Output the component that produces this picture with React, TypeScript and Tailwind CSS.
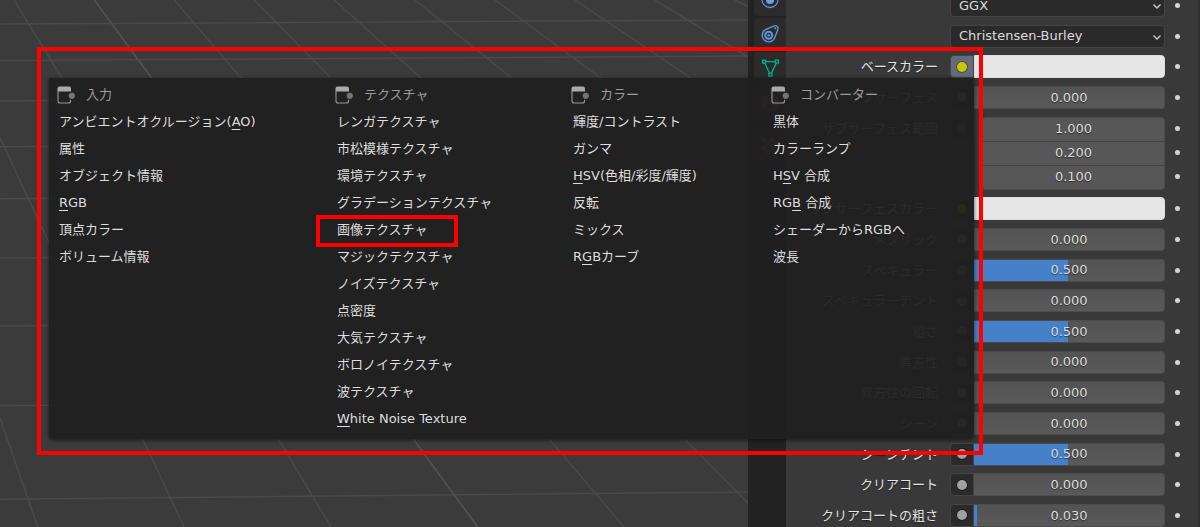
import { clsx } from 'clsx';
import type { ReactNode } from 'react';

type Field =
  | { kind: 'select'; id: string; label: string; value: string }
  | { kind: 'color'; id: string; label: string; active?: boolean }
  | { kind: 'slider'; id: string; label: string; value: string }
  | { kind: 'vector'; id: string; label: string; values: string[] };

const fields: Field[] = [
  { kind: 'select', id: 'distribution', label: 'ディストリビューション', value: 'GGX' },
  { kind: 'select', id: 'sss-method', label: 'サブサーフェス方式', value: 'Christensen-Burley' },
  { kind: 'color', id: 'base-color', label: 'ベースカラー', active: true },
  { kind: 'slider', id: 'subsurface', label: 'サブサーフェス', value: '0.000' },
  { kind: 'vector', id: 'radius', label: 'サブサーフェス範囲', values: ['1.000', '0.200', '0.100'] },
  { kind: 'color', id: 'sss-color', label: 'サブサーフェスカラー' },
  { kind: 'slider', id: 'metallic', label: 'メタリック', value: '0.000' },
  { kind: 'slider', id: 'specular', label: 'スペキュラー', value: '0.500' },
  { kind: 'slider', id: 'specular-tint', label: 'スペキュラーチント', value: '0.000' },
  { kind: 'slider', id: 'roughness', label: '粗さ', value: '0.500' },
  { kind: 'slider', id: 'anisotropic', label: '異方性', value: '0.000' },
  { kind: 'slider', id: 'anisotropic-rotation', label: '異方性の回転', value: '0.000' },
  { kind: 'slider', id: 'sheen', label: 'シーン', value: '0.000' },
  { kind: 'slider', id: 'sheen-tint', label: 'シーンチント', value: '0.500' },
  { kind: 'slider', id: 'clearcoat', label: 'クリアコート', value: '0.000' },
  { kind: 'slider', id: 'clearcoat-roughness', label: 'クリアコートの粗さ', value: '0.030' },
];

// "&" marks the shortcut letter of an entry
const menu = [
  {
    title: '入力',
    items: ['アンビエントオクルージョン(&AO)', '属性', 'オブジェクト情報', '&RGB', '頂点カラー', 'ボリューム情報'],
  },
  {
    title: 'テクスチャ',
    items: [
      'レンガテクスチャ',
      '市松模様テクスチャ',
      '環境テクスチャ',
      'グラデーションテクスチャ',
      '画像テクスチャ',
      'マジックテクスチャ',
      'ノイズテクスチャ',
      '点密度',
      '大気テクスチャ',
      'ボロノイテクスチャ',
      '波テクスチャ',
      '&White Noise Texture',
    ],
  },
  {
    title: 'カラー',
    items: ['輝度/コントラスト', 'ガンマ', '&HSV(色相/彩度/輝度)', '反転', 'ミックス', 'R&GBカーブ'],
  },
  {
    title: 'コンバーター',
    items: ['黒体', 'カラーランプ', 'H&SV 合成', 'RG&B 合成', 'シェーダーからRGBへ', '波長'],
  },
];

const gridLines = [
  'M0 24L748 20M0 60.5L748 56M0 101L748 96M0 146.7L748 142M0 198.7L748 194M0 258L748 253M0 326L748 320M0 405.7L748 399M0 499.3L748 492',
  'M14 0L62 78M174.3 0L241 78M254.3 0L331 78M334.3 0L421 78M415 0L511.7 78M495 0L601 78M575 0L691 78M655 0L748 57M735 0L748 6.7',
  'M0 137.7L49 242.7M0 418L37.7 527M142.7 439L184 527M278.3 439L331 527M549.3 439L624 527M684.3 439L748 503',
];

const ViewportGrid = () => (
  <svg
    className="absolute inset-0 h-full w-full"
    viewBox="0 0 748 527"
    preserveAspectRatio="xMinYMin slice"
    fill="none"
    stroke="#4a4a4a"
    aria-hidden="true"
  >
    {gridLines.map(d => (
      <path key={d} d={d} strokeWidth="1.5" />
    ))}
    <path d="M94.3 0L151.7 78M413.3 439L477.7 527" stroke="#525252" strokeWidth="1.6" />
  </svg>
);

const NodeIcon = () => (
  <svg className="h-[18px] w-[18px] shrink-0" viewBox="0 0 18 18" fill="none" aria-hidden="true">
    <path d="M.5 5.5V2.5Q.5.5 2.5.5H12Q14 .5 14 2.5V5.5Z" fill="#aaaaaa" />
    <path d="M1 5V15Q1 17 3 17H11.5Q13.5 17 13.5 15V13.8" stroke="#9a9a9a" strokeWidth="1.1" />
    <circle cx="14.8" cy="9.8" r="3.1" fill="#757575" />
  </svg>
);

const PhysicsIcon = () => (
  <svg className="h-5 w-5" viewBox="0 0 20 20" fill="none" stroke="#5d92d6" aria-hidden="true">
    <circle cx="10" cy="9.5" r="8" strokeWidth="1.3" strokeDasharray="44 6" />
    <circle cx="10" cy="10" r="4" fill="#6ea0e0" stroke="none" />
  </svg>
);

const ConstraintIcon = () => (
  <svg className="h-5 w-5" viewBox="0 0 20 20" fill="none" stroke="#6099dc" aria-hidden="true">
    <path
      d="M5.9 5.4L14.3 1.8A2.8 2.8 0 0 1 18 5L14.75 13.65A6.5 6.5 0 1 1 5.9 5.4Z"
      strokeWidth="1.3"
    />
    <circle cx="8.7" cy="11.3" r="3.5" strokeWidth="2" />
    <circle cx="8.7" cy="11.3" r="1.3" fill="#6099dc" stroke="none" />
    <circle cx="15.4" cy="4.3" r="1" fill="#6099dc" stroke="none" />
  </svg>
);

const MeshIcon = () => (
  <svg className="h-5 w-5" viewBox="0 0 20 20" fill="none" stroke="#00b386" strokeWidth="1.3" aria-hidden="true">
    <path d="M2.6 2.1H5.6V5.1H2.6ZM15.4 2.1H18.4V5.1H15.4ZM8.9 15.1H11.9V18.1H8.9Z" />
    <path d="M5.6 3.6H15.4M4.8 5.1L9.4 15.1M16.2 5.1L11.4 15.1" />
  </svg>
);

const MaterialIcon = () => (
  <svg className="h-5 w-5" viewBox="0 0 20 20" fill="none" aria-hidden="true">
    <circle cx="10" cy="10" r="8.3" stroke="#d05050" strokeWidth="1.3" />
    <path d="M10 10L16 4.5A8 8 0 0 1 16 15.5ZM10 10L4 15.5A8 8 0 0 1 5 4Q10 3 10 10Z" fill="#d05050" />
  </svg>
);

const TextureIcon = () => (
  <svg className="h-5 w-5" viewBox="0 0 20 20" fill="#c04a4a" aria-hidden="true">
    <path d="M2 2H6V6H2ZM10 2H14V6H10ZM6 6H10V10H6ZM14 6H18V10H14ZM2 10H6V14H2ZM10 10H14V14H10ZM6 14H10V18H6ZM14 14H18V18H14Z" />
  </svg>
);

const Tab = ({ name, className, children }: { name: string; className?: string; children: ReactNode }) => (
  <button
    type="button"
    aria-label={name}
    className={clsx('flex h-8 w-8 shrink-0 items-center justify-center rounded-l bg-[#2b2b2b]', className)}
  >
    {children}
  </button>
);

const socketColor = (field: Field) => {
  if (field.kind === 'color') return 'bg-[#c8c800]';
  if (field.kind === 'vector') return 'bg-[#6464c8]';
  return 'bg-[#a1a1a1]';
};

const Socket = ({ field }: { field: Field }) => (
  <button
    type="button"
    aria-label={`${field.label} 入力`}
    className={clsx(
      'flex h-[23px] w-6 shrink-0 items-center justify-center rounded-l border border-[#444444]',
      field.kind === 'color' && field.active ? 'bg-[#656b78]' : 'bg-[#2a2a2a]',
    )}
  >
    <span className={clsx('h-[10px] w-[10px] rounded-full ring-1 ring-black/30', socketColor(field))} />
  </button>
);

const inputClass =
  'absolute inset-0 w-full bg-transparent text-center text-[#dcdcdc] outline-none [text-shadow:0_1px_1px_#0008]';

const fillPercent = (value: string) => Math.max(0, Number(value) * 102 - 1.5);

const FieldControl = ({ field }: { field: Field }) => {
  if (field.kind === 'select') {
    return (
      <div className="relative h-[23px] flex-1">
        <select
          id={field.id}
          aria-label={field.label}
          className="h-full w-full appearance-none rounded border border-[#444444] bg-[#2a2a2a] pl-2 leading-5 text-[#dcdcdc]"
        >
          <option>{field.value}</option>
        </select>
        <svg
          className="pointer-events-none absolute top-2 right-1 h-2 w-2"
          viewBox="0 0 8 8"
          fill="none"
          stroke="#cfcfcf"
          strokeWidth="1.4"
          aria-hidden="true"
        >
          <path d="M.5 2.5L4 6L7.5 2.5" />
        </svg>
      </div>
    );
  }

  if (field.kind === 'color') {
    return (
      <>
        <Socket field={field} />
        <button type="button" id={field.id} className="h-[23px] flex-1 rounded-r border border-[#dcdcdc] bg-[#e6e6e6]" />
      </>
    );
  }

  if (field.kind === 'vector') {
    return (
      <>
        <Socket field={field} />
        <div className="ml-2 flex h-[73px] flex-1 flex-col divide-y divide-[#424242] overflow-hidden rounded border border-[#4c4c4c] bg-[#575757]">
          {field.values.map((value, i) => (
            <div key={value} className="relative flex-1">
              <input id={i ? `${field.id}-${i}` : field.id} aria-label={field.label} defaultValue={value} className={inputClass} />
            </div>
          ))}
        </div>
      </>
    );
  }

  return (
    <>
      <Socket field={field} />
      <div className="relative h-[23px] flex-1 overflow-hidden rounded-r border-y border-r border-[#4c4c4c] bg-linear-to-b from-[#535353] to-[#595959]">
        <div className="h-full bg-[#4680c8]" style={{ width: `${fillPercent(field.value)}%` }} />
        <input id={field.id} defaultValue={field.value} className={inputClass} />
      </div>
    </>
  );
};

const Dots = ({ count }: { count: number }) => (
  <div className="flex w-[33px] shrink-0 flex-col pl-[10px]">
    {Array.from({ length: count }, (_, i) => (
      <div key={i} className={clsx('flex items-center', count > 1 ? 'h-6' : 'h-[23px]')}>
        <span className="h-[5px] w-[5px] rounded-full bg-[#d4d4d4]" />
      </div>
    ))}
  </div>
);

const Properties = () => (
  <section className="w-[414px] shrink-0 border-r-2 border-[#303030] bg-[#393939]">
    <div className="-mt-[6px] flex h-[calc(100%+6px)] flex-col justify-between">
      {fields.map(field => (
        <div key={field.id} className="flex items-start">
          {field.kind !== 'select' && (
            <label
              htmlFor={field.id}
              className="flex-1 pr-3 text-right leading-[23px] text-[#e4e4e4] [text-shadow:0_1px_1px_#0006]"
            >
              {field.label}
            </label>
          )}
          <div className="ml-auto flex w-[215px] shrink-0">
            <FieldControl field={field} />
          </div>
          <Dots count={field.kind === 'vector' ? 3 : 1} />
        </div>
      ))}
    </div>
  </section>
);

const MenuLabel = ({ text }: { text: string }) => {
  const at = text.indexOf('&');
  if (at < 0) return <>{text}</>;
  return (
    <>
      {text.slice(0, at)}
      <span className="underline decoration-1 underline-offset-3">{text[at + 1]}</span>
      {text.slice(at + 2)}
    </>
  );
};

const NodeMenu = () => (
  <div
    role="menu"
    className="absolute top-[78px] left-[49px] grid grid-cols-[278px_236px_200px_211px] rounded-b bg-[#202020]/95 pt-[3px] pb-[7px] shadow-[0_1px_4px_#0009]"
  >
    {menu.map(column => (
      <div key={column.title}>
        <h2 className="flex h-[27px] items-center gap-[11px] pl-2 text-[#9c9c9c]">
          <NodeIcon />
          {column.title}
        </h2>
        {column.items.map(item => (
          <button
            key={item}
            type="button"
            role="menuitem"
            className="relative flex h-[27px] w-full items-center pl-[10px] text-left whitespace-pre text-[#dedede]"
          >
            <span>
              <MenuLabel text={item} />
            </span>
            {item === '画像テクスチャ' && (
              <span className="absolute -top-px -left-[11px] h-8 w-[142px] border-4 border-[#ff0000]" />
            )}
          </button>
        ))}
      </div>
    ))}
  </div>
);

export default function App() {
  return (
    <div className="relative flex h-screen w-full overflow-hidden bg-[#212121] font-['DejaVu_Sans','Noto_Sans_CJK_JP',sans-serif] text-[13px]">
      <main className="relative flex-1 bg-[#3b3b3b]">
        <ViewportGrid />
      </main>
      <nav className="w-[38px] shrink-0 bg-[#222222] pl-[6px]">
        <div className="-mt-4 flex flex-col gap-[2px]">
          <Tab name="物理演算">
            <PhysicsIcon />
          </Tab>
          <Tab name="コンストレイント">
            <ConstraintIcon />
          </Tab>
          <Tab name="オブジェクトデータ">
            <MeshIcon />
          </Tab>
          <Tab name="マテリアル">
            <MaterialIcon />
          </Tab>
          <Tab name="テクスチャ" className="mt-[10px]">
            <TextureIcon />
          </Tab>
        </div>
      </nav>
      <Properties />
      <NodeMenu />
      <div className="pointer-events-none absolute top-[47px] left-[37px] h-[408px] w-[946px] border-4 border-[#ff0000]" />
    </div>
  );
}
